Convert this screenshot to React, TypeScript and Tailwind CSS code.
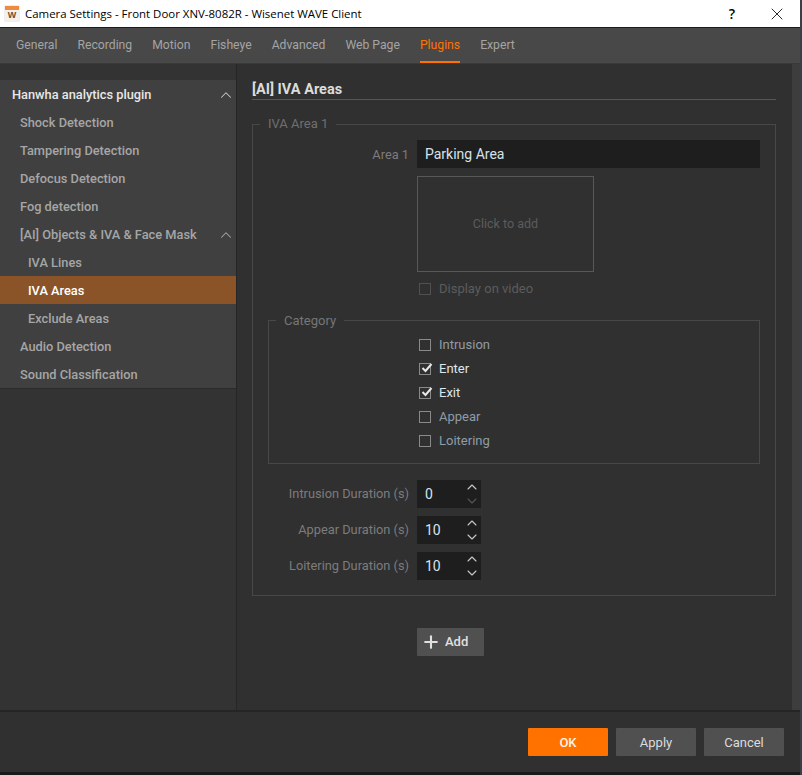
import { ChevronDown, ChevronUp, Plus, X } from 'lucide-react';

const tabs = ['General', 'Recording', 'Motion', 'Fisheye', 'Advanced', 'Web Page', 'Plugins', 'Expert'];

const navItems = [
  { label: 'Shock Detection', indent: 'pl-5' },
  { label: 'Tampering Detection', indent: 'pl-5' },
  { label: 'Defocus Detection', indent: 'pl-5' },
  { label: 'Fog detection', indent: 'pl-5' },
  { label: '[AI] Objects & IVA & Face Mask', indent: 'pl-5', chevron: true },
  { label: 'IVA Lines', indent: 'pl-7' },
  { label: 'IVA Areas', indent: 'pl-7', active: true },
  { label: 'Exclude Areas', indent: 'pl-7' },
  { label: 'Audio Detection', indent: 'pl-5' },
  { label: 'Sound Classification', indent: 'pl-5' },
];

const categories = [
  { label: 'Intrusion', checked: false },
  { label: 'Enter', checked: true },
  { label: 'Exit', checked: true },
  { label: 'Appear', checked: false },
  { label: 'Loitering', checked: false },
];

const durations = [
  { label: 'Intrusion Duration (s)', value: '0', atMin: true },
  { label: 'Appear Duration (s)', value: '10' },
  { label: 'Loitering Duration (s)', value: '10' },
];

function Checkbox({ checked, dim }: { checked?: boolean; dim?: boolean }) {
  return (
    <span className={`relative block w-3 h-3 shrink-0 border ${dim ? 'border-[#505050]' : 'border-[#8a8a8a]'}`}>
      {checked && (
        <svg viewBox="0 0 14 14" className="absolute left-[0px] top-[-3px] w-[14px] h-[14px]">
          <path d="M2.5 7 L5.5 10 L11.5 3" fill="none" stroke="#e8e8e8" strokeWidth="2" />
        </svg>
      )}
    </span>
  );
}

function Spinner({ value, atMin }: { value: string; atMin?: boolean }) {
  return (
    <div className="w-16 h-7 bg-[#1e1e1e] flex items-center justify-between pl-2 pr-px text-[14px] text-[#d8e2ea]">
      <span className="pt-px">{value}</span>
      <div className="flex flex-col items-center">
        <ChevronUp className="w-4 h-4 text-[#c8c8c8] -mb-[2px]" strokeWidth={1.6} />
        <ChevronDown className={`w-4 h-4 ${atMin ? 'text-[#555555]' : 'text-[#c8c8c8]'}`} strokeWidth={1.6} />
      </div>
    </div>
  );
}

export default function App() {
  return (
    <div className="w-[802px] h-[775px] flex bg-[#1a1a1a] overflow-hidden font-['Roboto',sans-serif] text-[13px]">
      <div className="w-[800px] h-[772px] flex flex-col bg-[#303030]">
        {/* title bar */}
        <div className="h-[27px] bg-white flex items-center shrink-0 font-['Open_Sans',sans-serif] text-[11.45px] text-black">
          <div className="ml-[5px] w-[14px] h-[15px] flex flex-col shadow-[0_0_1px_#999]">
            <div className="h-1 bg-[#f08a3c]" />
            <div className="flex-1 bg-[#f4f0ec] flex items-center justify-center font-['Liberation_Sans',sans-serif] text-[9px] leading-none font-bold text-[#7a4a2a]">W</div>
          </div>
          <span className="ml-[6px]">Camera Settings - Front Door XNV-8082R - Wisenet WAVE Client</span>
          <span className="ml-auto mr-[32px] text-[14px] font-semibold">?</span>
          <X className="w-5 h-5 mr-[13px]" strokeWidth={1} />
        </div>
        <div className="h-px bg-[#1c1c1c] shrink-0" />

        {/* tabs */}
        <div className="h-9 bg-[#484848] flex pl-4 gap-5 shrink-0 border-b border-[#3a3a3a] text-[12.2px]">
          {tabs.map(tab => (
            <div
              key={tab}
              className={`h-full flex items-center pt-[2px] border-b-2 ${tab === 'Plugins' ? 'border-[#ff7200] text-[#ff7200]' : 'border-transparent text-[#a4a4a4]'}`}
            >
              {tab}
            </div>
          ))}
        </div>

        <div className="flex-1 flex min-h-0">
          {/* sidebar */}
          <div className="w-[237px] shrink-0 bg-[#333333] border-r border-[#262626] pt-4">
            <div className="bg-[#404040] border-b border-[#2b2b2b] font-medium text-[#a6a6a6] text-[12.8px]">
              <div className="h-7 pl-3 pr-px pt-px flex items-center justify-between text-[#e8e8e8]">
                <span>Hanwha analytics plugin</span>
                <ChevronUp className="w-[18px] h-[18px] text-[#c8c8c8]" strokeWidth={1.4} />
              </div>
              {navItems.map(item => (
                <div
                  key={item.label}
                  className={`h-7 ${item.indent} pr-px pt-px flex items-center justify-between ${item.active ? 'bg-[#8b5428] text-white' : ''}`}
                >
                  <span>{item.label}</span>
                  {item.chevron && <ChevronUp className="w-[18px] h-[18px] text-[#a8a8a8]" strokeWidth={1.4} />}
                </div>
              ))}
            </div>
          </div>

          {/* content */}
          <div className="flex-1 flex min-w-0">
            <div className="flex-1 pl-[15px] pr-[16px] pt-4 min-w-0">
              <div className="h-5 border-b border-[#565656] text-[14.5px] leading-[20px] font-bold text-[#dcdcdc]">[AI] IVA Areas</div>

              <fieldset className="mt-4 h-[480px] border border-[#484848] pl-[15px] pr-[15px]">
                <legend className="-ml-2 px-2 text-[#6f6f6f] h-[16px] leading-[16px]">IVA Area 1</legend>

                <div className="flex items-center mt-2">
                  <span className="w-[141px] pt-px text-right text-[12.8px] text-[#7c7c7c]">Area 1</span>
                  <div className="ml-2 flex-1 h-7 pt-px bg-[#1e1e1e] flex items-center pl-2 text-[14px] text-[#d8e2ea]">Parking Area</div>
                </div>

                <div className="ml-[141px] pl-2">
                  <div className="mt-2 w-[177px] h-24 border border-[#585858] flex items-center justify-center text-[12.5px] text-[#5c5c5c]">Click to add</div>
                  <div className="mt-[7px] ml-[2px] flex items-center gap-2 text-[#5c5c5c]">
                    <Checkbox dim />
                    <span>Display on video</span>
                  </div>
                </div>

                <fieldset className="mt-[14px] h-[151px] border border-[#484848]">
                  <legend className="ml-[7px] px-2 text-[#767676] h-[16px] leading-[16px]">Category</legend>
                  <div className="pl-[150px] pt-1">
                    {categories.map(cat => (
                      <div key={cat.label} className={`h-6 flex items-center gap-2 ${cat.checked ? 'text-[#dfe6ec]' : 'text-[#8f9ca6]'}`}>
                        <Checkbox checked={cat.checked} />
                        <span>{cat.label}</span>
                      </div>
                    ))}
                  </div>
                </fieldset>

                <div className="mt-4 flex flex-col gap-2">
                  {durations.map(d => (
                    <div key={d.label} className="flex items-center">
                      <span className="w-[141px] pt-px text-right text-[12.8px] text-[#7c7c7c]">{d.label}</span>
                      <div className="ml-2">
                        <Spinner value={d.value} atMin={d.atMin} />
                      </div>
                    </div>
                  ))}
                </div>
              </fieldset>

              <button className="mt-8 ml-[165px] w-[67px] h-7 bg-[#505050] rounded-[1px] flex items-center pl-[4px] gap-[4px] font-medium text-[#e0e0e0]">
                <Plus className="w-5 h-5" strokeWidth={2.5} />
                <span>Add</span>
              </button>
            </div>
            {/* scrollbar */}
            <div className="w-2 bg-[#3d3d3d] shrink-0" />
          </div>
        </div>

        {/* footer */}
        <div className="h-[62px] shrink-0 border-t-2 border-[#252525] bg-[#303030] flex items-start justify-end gap-2 pt-4 pr-4">
          <button className="w-20 h-7 pt-px bg-[#ff7200] rounded-[1px] font-medium text-[#fff3e8]">OK</button>
          <button className="w-20 h-7 pt-px bg-[#505050] rounded-[1px] text-[#dcdcdc]">Apply</button>
          <button className="w-20 h-7 pt-px bg-[#505050] rounded-[1px] text-[#dcdcdc]">Cancel</button>
        </div>
      </div>
      <div className="w-[2px] h-full bg-[#3a3f45]" />
    </div>
  );
}
